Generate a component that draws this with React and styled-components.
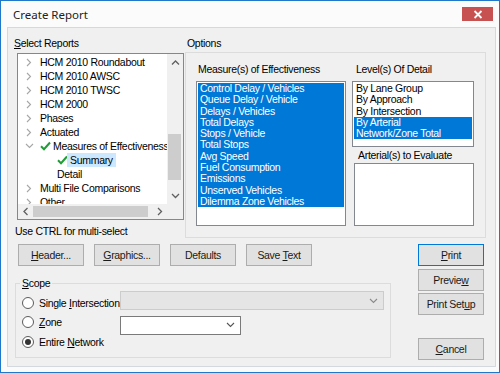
import React from 'react';
import styled, { createGlobalStyle } from 'styled-components';

const GlobalStyle = createGlobalStyle`
  html, body {
    margin: 0;
    padding: 0;
    background: #ffffff;
  }
  body {
    font-family: "Liberation Sans", Arial, sans-serif;
    font-size: 10.5px;
    letter-spacing: -0.3px;
    color: #000;
  }
  * {
    box-sizing: border-box;
  }
`;

const Window = styled.div`
  width: 500px;
  height: 373px;
  border: 1px solid #1f78c9;
  background: #fbfbfb;
  display: flex;
  flex-direction: column;
`;

const TitleBar = styled.div`
  height: 26px;
  display: flex;
  align-items: center;
  justify-content: space-between;
  padding: 0 6px 0 12px;
`;

const Title = styled.div`
  font-family: "Noto Sans", "Open Sans", sans-serif;
  font-size: 11.5px;
  letter-spacing: 0;
  color: #222;
`;

const CloseButton = styled.div`
  width: 31px;
  height: 14px;
  background: #c75050;
  display: flex;
  align-items: center;
  justify-content: center;
`;

const Client = styled.div`
  height: 340px;
  margin: 0 3px 5px 6px;
  border: 1px solid #d4d9df;
  background: #f0f0f0;
  padding: 9px 0 0 6px;
`;

const TopRow = styled.div`
  display: flex;
  gap: 2px;
`;

const LeftCol = styled.div`
  width: 169px;
`;

const Caption = styled.div`
  line-height: 13px;
  height: 13px;
  white-space: nowrap;
  margin-left: ${(p) => p.$indent || 0}px;
  margin-top: ${(p) => p.$top || 0}px;
`;

const TreeBox = styled.div`
  margin: 3px 0 0 3px;
  width: 167px;
  height: 167px;
  border: 1px solid #828790;
  background: #fff;
  display: grid;
  grid-template-columns: 1fr 16px;
  grid-template-rows: 1fr 15px;
`;

const TreeItems = styled.div`
  overflow: hidden;
  padding-top: 1px;
`;

const TreeRow = styled.div`
  height: 14px;
  display: flex;
  align-items: center;
  padding-left: ${(p) => p.$level * 17}px;
  white-space: nowrap;
`;

const Expander = styled.span`
  width: 22px;
  height: 14px;
  display: flex;
  align-items: center;
  justify-content: center;
  flex: none;
`;

const CheckSlot = styled.span`
  width: 13px;
  height: 14px;
  display: flex;
  align-items: center;
  flex: none;
`;

const TreeLabel = styled.span`
  line-height: 14px;
  padding: 0 3px;
  margin-left: -3px;
  background: ${(p) => (p.$selected ? '#cce8ff' : 'transparent')};
`;

const VScroll = styled.div`
  background: #f0f0f0;
  display: flex;
  flex-direction: column;
`;

const HScroll = styled.div`
  background: #f0f0f0;
  display: flex;
`;

const Corner = styled.div`
  background: #f0f0f0;
`;

const ArrowCell = styled.div`
  flex: none;
  width: ${(p) => p.$w}px;
  height: ${(p) => p.$h}px;
  display: flex;
  align-items: center;
  justify-content: center;
`;

const VTrack = styled.div`
  flex: 1;
  padding: 63px 2px 0 1px;
`;

const VThumb = styled.div`
  height: 46px;
  background: #cdcdcd;
`;

const HTrack = styled.div`
  flex: 1;
  padding: 2px 0 2px 0;
`;

const HThumb = styled.div`
  width: 115px;
  height: 11px;
  background: #cdcdcd;
`;

const OptionsCol = styled.div`
  width: 301px;
`;

const GroupBox = styled.div`
  border: 1px solid #dcdcdc;
  margin-top: ${(p) => p.$top || 0}px;
  height: ${(p) => p.$h}px;
  width: ${(p) => p.$w}px;
`;

const OptionsInner = styled.div`
  display: flex;
  gap: 6px;
  padding: 10px 0 0 10px;
`;

const Column = styled.div`
  width: ${(p) => p.$w}px;
  display: flex;
  flex-direction: column;
`;

const ListBox = styled.div`
  margin-top: ${(p) => p.$top}px;
  margin-left: ${(p) => p.$left || 0}px;
  width: ${(p) => p.$w}px;
  height: ${(p) => p.$h}px;
  border: 1px solid #828790;
  background: #fff;
  padding: 1px;
`;

const ListItem = styled.div`
  height: 11.3px;
  line-height: 11.3px;
  padding-left: 2px;
  white-space: nowrap;
  background: ${(p) => (p.$selected ? '#0078d7' : 'transparent')};
  color: ${(p) => (p.$selected ? '#fff' : '#000')};
`;

const BottomRow = styled.div`
  display: flex;
  margin: 6px 0 0 1px;
`;

const LeftPart = styled.div`
  width: 376px;
`;

const ButtonRow = styled.div`
  display: flex;
  gap: 10px;
  margin-left: 3px;
`;

const Button = styled.button`
  width: 66px;
  height: 22px;
  padding: 0;
  margin-top: ${(p) => p.$top || 0}px;
  font: inherit;
  letter-spacing: inherit;
  color: #1a1a1a;
  background: #e1e1e1;
  border: 1px solid ${(p) => (p.$default ? '#0078d7' : '#adadad')};
  flex: none;
`;

const Legend = styled.div`
  width: fit-content;
  margin: -7px 0 0 4px;
  padding: 0 2px;
  line-height: 13px;
  background: #f0f0f0;
`;

const ScopeGrid = styled.div`
  margin: 3px 0 0 6px;
  display: grid;
  grid-template-columns: 98px auto;
  grid-auto-rows: 19.5px;
`;

const RadioLabel = styled.label`
  display: flex;
  align-items: center;
  gap: 5px;
  white-space: nowrap;
`;

const RadioCircle = styled.span`
  width: 12px;
  height: 12px;
  border-radius: 50%;
  border: 1px solid #5c5c5c;
  background: #fff;
  display: flex;
  align-items: center;
  justify-content: center;
  flex: none;

  &::after {
    content: '';
    width: 6px;
    height: 6px;
    border-radius: 50%;
    background: ${(p) => (p.$checked ? '#333' : 'transparent')};
  }
`;

const Combo = styled.div`
  width: ${(p) => p.$w}px;
  height: 19px;
  margin-top: ${(p) => p.$top}px;
  border: 1px solid ${(p) => (p.$disabled ? '#cccccc' : '#7a7a7a')};
  background: ${(p) => (p.$disabled ? '#e5e5e5' : '#fff')};
  display: flex;
  align-items: center;
  justify-content: flex-end;
  padding-right: 5px;
`;

const RightPart = styled.div`
  margin-left: 27px;
  display: flex;
  flex-direction: column;
`;

const Chevron = ({ down, color = '#a6a6a6' }) =>
  down ? (
    <svg width="9" height="6" viewBox="0 0 9 6">
      <path d="M1 1l3.5 3.5L8 1" stroke={color} fill="none" strokeWidth="1.1" />
    </svg>
  ) : (
    <svg width="6" height="9" viewBox="0 0 6 9">
      <path d="M1 1l3.5 3.5L1 8" stroke={color} fill="none" strokeWidth="1.1" />
    </svg>
  );

const Check = () => (
  <svg width="11" height="10" viewBox="0 0 11 10">
    <path d="M1 5.2l3 3L10 1.5" stroke="#1e9e35" fill="none" strokeWidth="2" />
  </svg>
);

const ScrollArrow = ({ dir }) => {
  const paths = {
    up: 'M1 4.5l3.5-3.5 3.5 3.5',
    down: 'M1 1l3.5 3.5L8 1',
    left: 'M4.5 1L1 4.5 4.5 8',
    right: 'M1 1l3.5 3.5L1 8',
  };
  const vertical = dir === 'up' || dir === 'down';
  return (
    <svg width={vertical ? 9 : 6} height={vertical ? 6 : 9} viewBox={vertical ? '0 0 9 6' : '0 0 6 9'}>
      <path d={paths[dir]} stroke="#606060" fill="none" strokeWidth="1.3" />
    </svg>
  );
};

const treeData = [
  { label: 'HCM 2010 Roundabout', level: 0, expander: 'right' },
  { label: 'HCM 2010 AWSC', level: 0, expander: 'right' },
  { label: 'HCM 2010 TWSC', level: 0, expander: 'right' },
  { label: 'HCM 2000', level: 0, expander: 'right' },
  { label: 'Phases', level: 0, expander: 'right' },
  { label: 'Actuated', level: 0, expander: 'right' },
  { label: 'Measures of Effectiveness', level: 0, expander: 'down', checked: true },
  { label: 'Summary', level: 1, checked: true, selected: true },
  { label: 'Detail', level: 1 },
  { label: 'Multi File Comparisons', level: 0, expander: 'right' },
  { label: 'Other', level: 0, expander: 'right' },
];

const measures = [
  'Control Delay / Vehicles',
  'Queue Delay / Vehicle',
  'Delays / Vehicles',
  'Total Delays',
  'Stops / Vehicle',
  'Total Stops',
  'Avg Speed',
  'Fuel Consumption',
  'Emissions',
  'Unserved Vehicles',
  'Dilemma Zone Vehicles',
];

const levels = [
  { label: 'By Lane Group' },
  { label: 'By Approach' },
  { label: 'By Intersection' },
  { label: 'By Arterial', selected: true },
  { label: 'Network/Zone Total', selected: true },
];

const App = () => (
  <>
    <GlobalStyle />
    <Window>
      <TitleBar>
        <Title>Create Report</Title>
        <CloseButton>
          <svg width="10" height="9" viewBox="0 0 10 9">
            <path d="M1.5 1l7 7M8.5 1l-7 7" stroke="#fff" strokeWidth="1.8" />
          </svg>
        </CloseButton>
      </TitleBar>
      <Client>
        <TopRow>
          <LeftCol>
            <Caption>
              <u>S</u>elect Reports
            </Caption>
            <TreeBox>
              <TreeItems>
                {treeData.map((item) => (
                  <TreeRow key={item.label} $level={item.level}>
                    <Expander>{item.expander && <Chevron down={item.expander === 'down'} />}</Expander>
                    {item.checked && (
                      <CheckSlot>
                        <Check />
                      </CheckSlot>
                    )}
                    <TreeLabel $selected={item.selected}>{item.label}</TreeLabel>
                  </TreeRow>
                ))}
              </TreeItems>
              <VScroll>
                <ArrowCell $w={16} $h={17}>
                  <ScrollArrow dir="up" />
                </ArrowCell>
                <VTrack>
                  <VThumb />
                </VTrack>
                <ArrowCell $w={16} $h={17}>
                  <ScrollArrow dir="down" />
                </ArrowCell>
              </VScroll>
              <HScroll>
                <ArrowCell $w={15} $h={15}>
                  <ScrollArrow dir="left" />
                </ArrowCell>
                <HTrack>
                  <HThumb />
                </HTrack>
                <ArrowCell $w={15} $h={15}>
                  <ScrollArrow dir="right" />
                </ArrowCell>
              </HScroll>
              <Corner />
            </TreeBox>
            <Caption $indent={1} $top={5}>
              Use CTRL for multi-select
            </Caption>
          </LeftCol>

          <OptionsCol>
            <Caption $indent={2}>Options</Caption>
            <GroupBox $top={2} $h={186} $w={301}>
              <OptionsInner>
                <Column $w={150}>
                  <Caption $indent={2}>Measure(s) of Effectiveness</Caption>
                  <ListBox $top={5} $w={150} $h={145}>
                    {measures.map((m) => (
                      <ListItem key={m} $selected>
                        {m}
                      </ListItem>
                    ))}
                  </ListBox>
                </Column>
                <Column $w={122}>
                  <Caption $indent={4}>Level(s) Of Detail</Caption>
                  <ListBox $top={5} $w={122} $h={66}>
                    {levels.map((l) => (
                      <ListItem key={l.label} $selected={l.selected}>
                        {l.label}
                      </ListItem>
                    ))}
                  </ListBox>
                  <Caption $indent={6} $top={2}>
                    Arterial(s) to Evaluate
                  </Caption>
                  <ListBox $top={1} $left={2} $w={120} $h={63} />
                </Column>
              </OptionsInner>
            </GroupBox>
          </OptionsCol>
        </TopRow>

        <BottomRow>
          <LeftPart>
            <ButtonRow>
              <Button>
                <u>H</u>eader...
              </Button>
              <Button>
                <u>G</u>raphics...
              </Button>
              <Button>Defaults</Button>
              <Button>
                Save <u>T</u>ext
              </Button>
            </ButtonRow>
            <GroupBox $top={17} $h={75} $w={376}>
              <Legend>
                <u>S</u>cope
              </Legend>
              <ScopeGrid>
                <RadioLabel>
                  <RadioCircle />
                  <span>
                    Single <u>I</u>ntersection
                  </span>
                </RadioLabel>
                <Combo $w={264} $top={-2} $disabled>
                  <Chevron down color="#8a8a8a" />
                </Combo>
                <RadioLabel>
                  <RadioCircle />
                  <span>
                    <u>Z</u>one
                  </span>
                </RadioLabel>
                <Combo $w={121} $top={3}>
                  <Chevron down color="#555" />
                </Combo>
                <RadioLabel>
                  <RadioCircle $checked />
                  <span>
                    Entire <u>N</u>etwork
                  </span>
                </RadioLabel>
              </ScopeGrid>
            </GroupBox>
          </LeftPart>
          <RightPart>
            <Button $default>
              <u>P</u>rint
            </Button>
            <Button $top={3}>
              Previe<u>w</u>
            </Button>
            <Button $top={2}>
              Print Set<u>u</u>p
            </Button>
            <Button $top={23}>
              <u>C</u>ancel
            </Button>
          </RightPart>
        </BottomRow>
      </Client>
    </Window>
  </>
);

export default App;
